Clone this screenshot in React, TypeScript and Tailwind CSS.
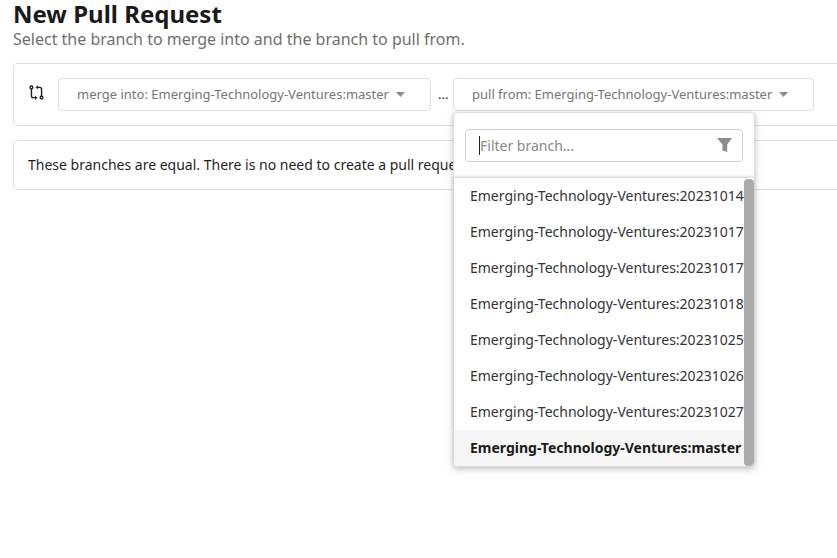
const branches = [
  "20231014",
  "20231017",
  "20231017",
  "20231018",
  "20231025",
  "20231026",
  "20231027",
];

function Caret() {
  return (
    <svg width="9" height="5" viewBox="0 0 9 5" className="ml-[7px] shrink-0">
      <path d="M0 0h9L4.5 5z" fill="#8c8c8c" />
    </svg>
  );
}

function PullRequestIcon() {
  return (
    <svg width="15" height="15" viewBox="0 0 16 16" fill="none" stroke="#1f1f1f" strokeWidth="1.5" className="mb-[4px] shrink-0">
      <circle cx="2.6" cy="2.6" r="1.5" />
      <path d="M2.6 4.1V11.5q0 2 2 2h2.4" />
      <path d="M6.4 11.4 9 13.5 6.4 15.6z" fill="#1f1f1f" stroke="none" />
      <circle cx="13.4" cy="13.4" r="1.5" />
      <path d="M13.4 11.9V4.5q0-2-2-2H9" />
      <path d="M9.6 .4 7 2.5 9.6 4.6z" fill="#1f1f1f" stroke="none" />
    </svg>
  );
}

function FilterIcon() {
  return (
    <svg width="15" height="14" viewBox="0 0 15 14">
      <path d="M0 0h15L10.2 6.5V14L5.4 12.6V6.5z" fill="#8c8c8c" />
    </svg>
  );
}

export default function App() {
  return (
    <div className="h-[558px] w-[837px] overflow-hidden bg-white pl-[13px] font-['Noto_Sans',sans-serif]">
      {/* header */}
      <h2 className="text-[24px] leading-[28px] font-bold text-[#1a1a1a]">New Pull Request</h2>
      <p className="text-[16px] leading-[22px] text-[#6f6f6f]">
        Select the branch to merge into and the branch to pull from.
      </p>

      {/* branch selectors */}
      <div className="mt-[13px] flex h-[63px] w-[840px] items-center rounded-[4px] border border-[#dedede] pl-[15px]">
        <PullRequestIcon />
        <button className="ml-[14px] flex h-[33px] w-[373px] items-center rounded-[4px] border border-[#dedede] pl-[18px] text-[13px] text-[#767676]">
          merge into: Emerging-Technology-Ventures:master
          <Caret />
        </button>
        <span className="ml-[7px] w-[15px] text-[13px] text-[#1f1f1f]">...</span>
        <div className="relative">
          <button className="flex h-[33px] w-[361px] items-center rounded-[4px] border border-[#dedede] pl-[18px] text-[13px] text-[#767676]">
            pull from: Emerging-Technology-Ventures:master
            <Caret />
          </button>

          {/* dropdown */}
          <div className="absolute top-[34px] left-0 z-10 w-[302px] rounded-[4px] border border-[#dedede] bg-white shadow-[0_2px_6px_rgba(0,0,0,0.25)]">
            <div className="flex h-[64px] items-center px-[11px]">
              <div className="flex h-[33px] w-[278px] items-center justify-between rounded-[4px] border border-[#c8d3dc] pr-[10px] pl-[14px]">
                <span className="-ml-px border-l border-[#1f1f1f] pt-[1px] text-[14px] leading-[18px] text-[#8a8a8a]">Filter branch...</span>
                <FilterIcon />
              </div>
            </div>
            <div className="relative overflow-hidden rounded-b-[4px] border-t border-[#dedede] shadow-[0_-1px_3px_rgba(0,0,0,0.12)]">
              {branches.map((b, i) => (
                <div key={i} className="flex h-[36px] items-center pb-[2px] pl-[16px] text-[14px] whitespace-nowrap text-[#333333]">
                  Emerging-Technology-Ventures:{b}
                </div>
              ))}
              <div className="flex h-[36px] items-center bg-[#f6f6f6] pb-[1px] pl-[16px] text-[14px] font-bold whitespace-nowrap text-[#1a1a1a]">
                Emerging-Technology-Ventures:master
              </div>
              <div className="absolute top-[1px] right-0 bottom-0 w-[10px] rounded-[4px] bg-[#ababab]" />
            </div>
          </div>
        </div>
      </div>

      {/* notice */}
      <div className="mt-[14px] flex h-[50px] w-[840px] items-center rounded-[4px] border border-[#dedede] pb-[2px] pl-[14px] text-[14px] text-[#1f1f1f]">
        These branches are equal. There is no need to create a pull request.
      </div>
    </div>
  );
}
